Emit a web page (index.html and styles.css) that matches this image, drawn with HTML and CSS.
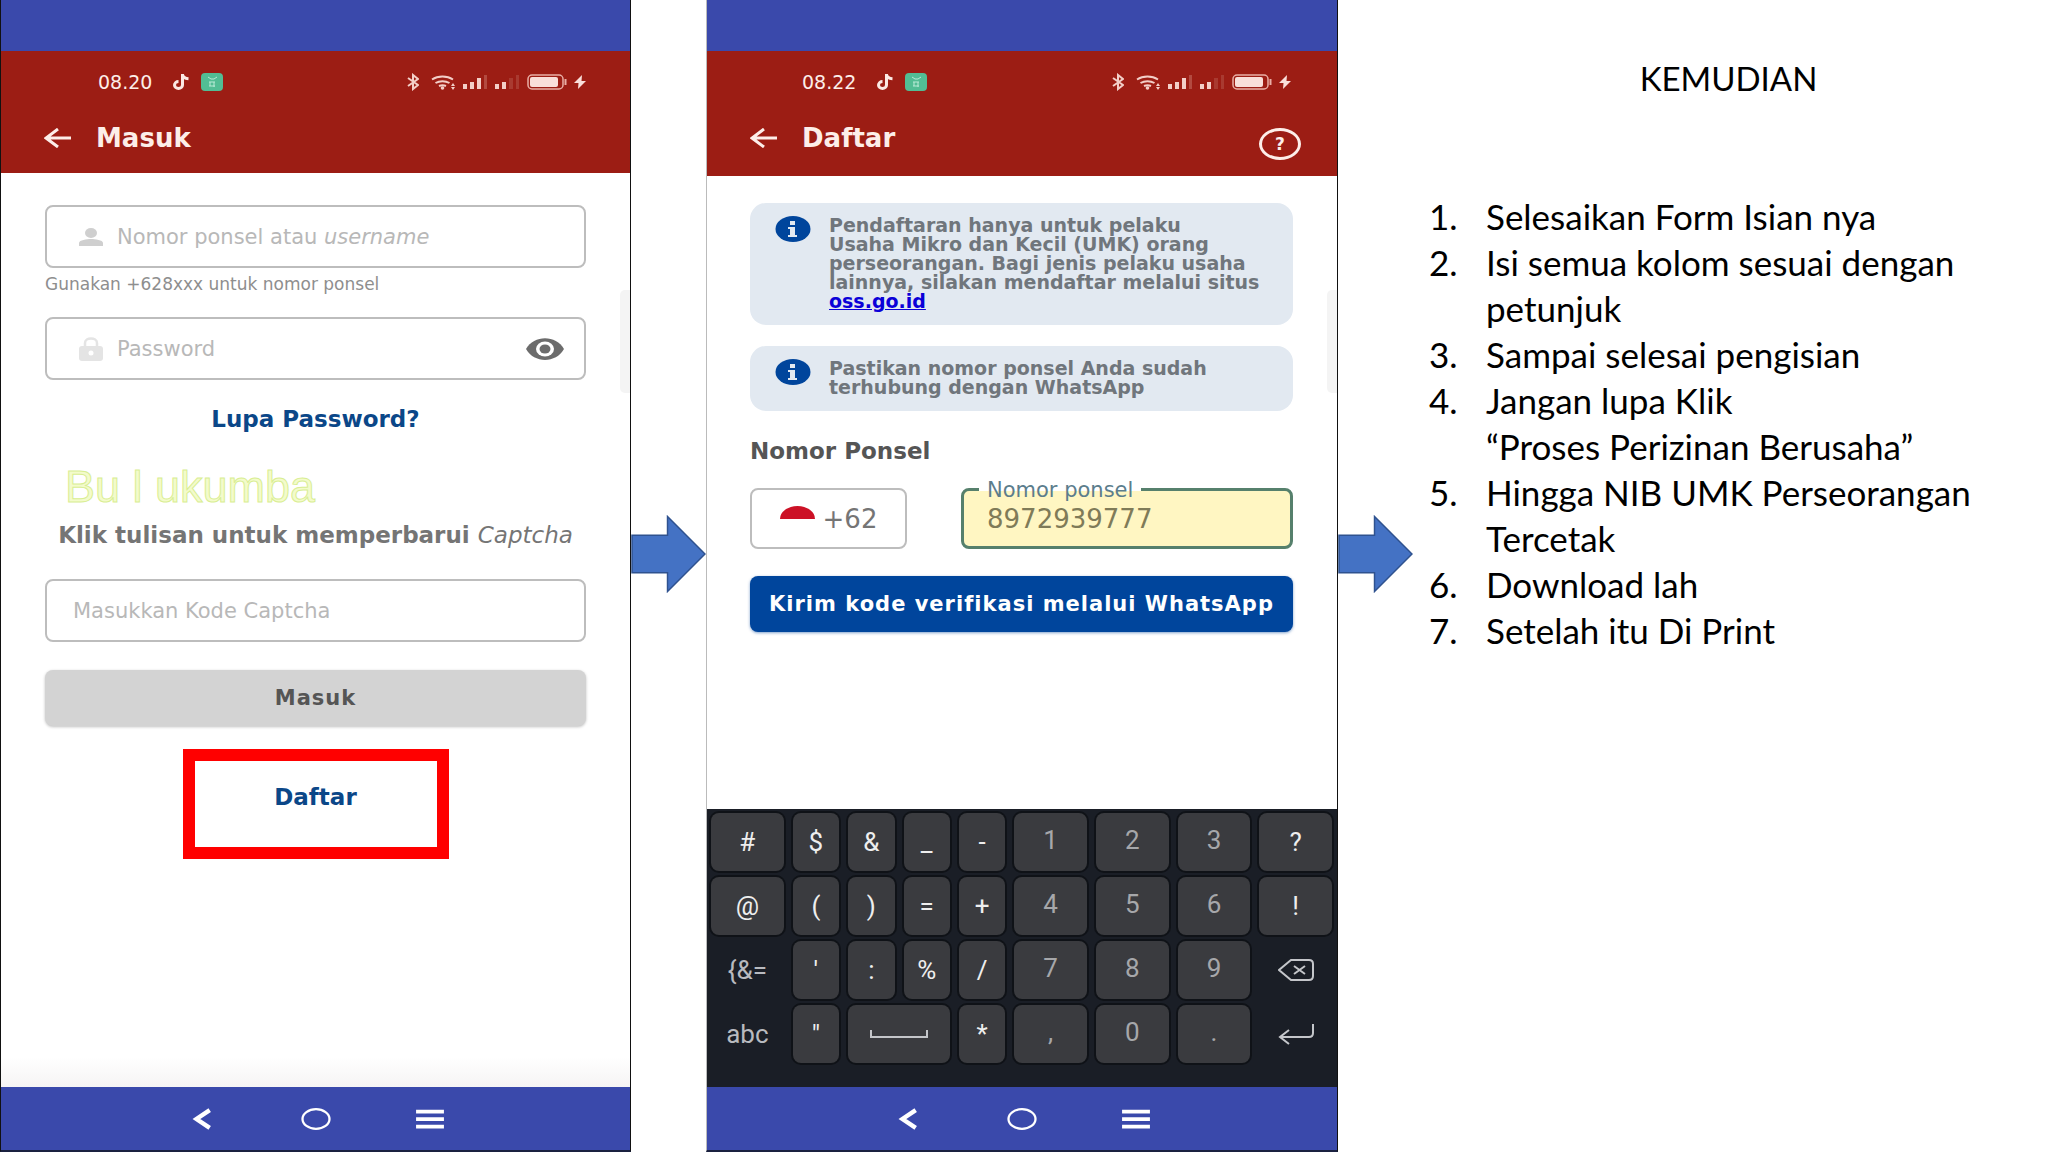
FILE: index.html
```html
<!DOCTYPE html>
<html lang="id">
<head>
  <meta charset="UTF-8">
  <meta name="viewport" content="width=device-width, initial-scale=1.0">
  <title>Panduan Pendaftaran NIB</title>
  <link rel="stylesheet" href="styles.css">
</head>
<body>
  <!-- Ikon bersama -->
  <svg class="sprite" aria-hidden="true">
    <symbol id="tiktok" viewBox="0 0 18 18">
      <path d="M10.500 1v11a4 3.500 0 1 1-4-3.500M10.500 1.500c.5 3 2.500 4 6 4.200" fill="none" stroke="#fbe9e4" stroke-width="3"/>
    </symbol>
    <symbol id="app" viewBox="0 0 22 18">
      <rect width="22" height="18" rx="4" fill="#52bd94"/>
      <path d="M7 4l3 2h3l3-2M8 9h6M8 13h6M9 9v4M13 9v5" fill="none" stroke="#b9ead6" stroke-width="1"/>
    </symbol>
    <symbol id="bluetooth" viewBox="0 0 12 16">
      <path d="M1 4l10 7-5 4V1l5 4L1 12" fill="none" stroke="#f3cfc8" stroke-width="2"/>
    </symbol>
    <symbol id="wifi" viewBox="0 0 25 16">
      <path d="M1 5.500a16 12 0 0 1 21 0M4.500 9a11 8 0 0 1 14 0M8 12a6 4 0 0 1 7 0" fill="none" stroke="#f3cfc8" stroke-width="2"/>
      <circle cx="11.500" cy="14" r="1.800" fill="#f3cfc8"/>
      <path d="M20 12l2-3 2 3zM20 13l2 3 2-3z" fill="#f3cfc8"/>
    </symbol>
    <symbol id="signal" viewBox="0 0 25 14">
      <path d="M0 9h4v5H0zM7 7h4v7H7zM14 3h4v11h-4z" fill="#f3cfc8"/>
      <path d="M21 0h3v14h-3z" fill="#b34a40"/>
    </symbol>
    <symbol id="signal-low" viewBox="0 0 25 14">
      <path d="M0 9h4v5H0zM7 7h4v7H7z" fill="#f3cfc8"/>
      <path d="M14 3h4v11h-4zM21 0h3v14h-3z" fill="#a93a30"/>
    </symbol>
    <symbol id="battery" viewBox="0 0 40 16">
      <rect x="1" y="1" width="35" height="14" rx="4" fill="none" stroke="#e9aea5" stroke-width="1.500"/>
      <rect x="3" y="3" width="28" height="10" rx="2" fill="#f9dfda"/>
      <path d="M38.500 5v6" stroke="#e9aea5" stroke-width="2"/>
    </symbol>
    <symbol id="bolt" viewBox="0 0 12 14">
      <path d="M8 0L0 8h4.500L4 14l8-8H7.500z" fill="#f9dfda"/>
    </symbol>
    <symbol id="back" viewBox="0 0 28 20">
      <path d="M27 10H2M14 1L2 10l12 9" fill="none" stroke="#fdeee9" stroke-width="3"/>
    </symbol>
    <symbol id="info" viewBox="0 0 36 26">
      <ellipse cx="18" cy="13" rx="17.500" ry="13" fill="#00459c"/>
      <path d="M15 5h5v4h-5zM13 11h7v8h2v2h-9v-2h2v-6h-2z" fill="#e2e9f1"/>
    </symbol>
    <symbol id="nav-back" viewBox="0 0 18 20">
      <path d="M16 2L4 10l12 8" fill="none" stroke="#fff" stroke-width="4"/>
    </symbol>
    <symbol id="nav-home" viewBox="0 0 30 22">
      <ellipse cx="15" cy="11" rx="13.500" ry="9.800" fill="none" stroke="#fff" stroke-width="2.300"/>
    </symbol>
    <symbol id="nav-menu" viewBox="0 0 28 18">
      <path d="M1 2h26M1 9h26M1 16h26" stroke="#fff" stroke-width="3.500"/>
    </symbol>
    <symbol id="arrow" viewBox="0 0 76 78">
      <path d="M1 20H37V1L75 39 37 77V58H1z" fill="#4472c4" stroke="#2f528f" stroke-width="1.500"/>
    </symbol>
  </svg>

  <main class="slide">
    <section class="phone phone-login">
      <div class="top-strip"></div>
      <header class="app-header">
        <div class="status">
          <span class="clock">08.20</span>
          <svg class="i-tiktok"><use href="#tiktok"/></svg>
          <svg class="i-app"><use href="#app"/></svg>
          <div class="status-right">
            <svg class="i-bt"><use href="#bluetooth"/></svg>
            <svg class="i-signal"><use href="#wifi"/></svg>
            <svg class="i-signal"><use href="#signal"/></svg>
            <svg class="i-signal"><use href="#signal-low"/></svg>
            <svg class="i-battery"><use href="#battery"/></svg>
            <svg class="i-bolt"><use href="#bolt"/></svg>
          </div>
        </div>
        <div class="title-bar">
          <button class="icon-btn" aria-label="Kembali"><svg class="i-back"><use href="#back"/></svg></button>
          <h2>Masuk</h2>
        </div>
      </header>

      <form class="login-form">
        <div class="field">
          <svg class="field-icon" viewBox="0 0 24 24"><ellipse cx="12" cy="8" rx="6" ry="5" fill="#cfcfcf"/><path d="M0 21v-3c0-3 8-4 12-4s12 1 12 4v3z" fill="#cfcfcf"/></svg>
          <div class="field-text">
            <input type="text" id="user">
            <label for="user">Nomor ponsel atau <em>username</em></label>
          </div>
        </div>
        <p class="hint">Gunakan +628xxx untuk nomor ponsel</p>

        <div class="field">
          <svg class="field-icon" viewBox="0 0 24 24"><path d="M6 9V6c0-6 12-6 12 0v3" fill="none" stroke="#e4e4e4" stroke-width="2.500"/><rect y="9" width="24" height="15" rx="3" fill="#e4e4e4"/><circle cx="12" cy="16" r="2.500" fill="#fff"/></svg>
          <div class="field-text">
            <input type="password" id="pass">
            <label for="pass">Password</label>
          </div>
          <button type="button" class="icon-btn" aria-label="Lihat password">
            <svg class="i-eye" viewBox="0 0 38 22"><path d="M0 11C8-3.500 30-3.500 38 11 30 25.500 8 25.500 0 11z" fill="#6c6c6c"/><ellipse cx="19" cy="11" rx="9" ry="7.500" fill="#fff"/><ellipse cx="19" cy="11" rx="5.500" ry="4.500" fill="#6c6c6c"/></svg>
          </button>
        </div>

        <a href="#" class="link forgot">Lupa Password?</a>
        <button type="button" class="captcha">Bu l ukumba</button>
        <p class="captcha-note">Klik tulisan untuk memperbarui <em>Captcha</em></p>

        <div class="field field-plain">
          <div class="field-text">
            <input type="text" id="captcha">
            <label for="captcha">Masukkan Kode Captcha</label>
          </div>
        </div>

        <button type="button" class="btn btn-grey">Masuk</button>
        <div class="highlight"><a href="#" class="link">Daftar</a></div>
      </form>

      <div class="scroll-hint"></div>
      <nav class="nav-bar">
        <button class="icon-btn" aria-label="Kembali"><svg><use href="#nav-back"/></svg></button>
        <button class="icon-btn" aria-label="Beranda"><svg><use href="#nav-home"/></svg></button>
        <button class="icon-btn" aria-label="Menu"><svg><use href="#nav-menu"/></svg></button>
      </nav>
    </section>

    <svg class="arrow"><use href="#arrow"/></svg>

    <section class="phone phone-register">
      <div class="top-strip"></div>
      <header class="app-header">
        <div class="status">
          <span class="clock">08.22</span>
          <svg class="i-tiktok"><use href="#tiktok"/></svg>
          <svg class="i-app"><use href="#app"/></svg>
          <div class="status-right">
            <svg class="i-bt"><use href="#bluetooth"/></svg>
            <svg class="i-signal"><use href="#wifi"/></svg>
            <svg class="i-signal"><use href="#signal"/></svg>
            <svg class="i-signal"><use href="#signal-low"/></svg>
            <svg class="i-battery"><use href="#battery"/></svg>
            <svg class="i-bolt"><use href="#bolt"/></svg>
          </div>
        </div>
        <div class="title-bar">
          <button class="icon-btn" aria-label="Kembali"><svg class="i-back"><use href="#back"/></svg></button>
          <h2>Daftar</h2>
          <button class="help" aria-label="Bantuan">?</button>
        </div>
      </header>

      <form class="register-form">
        <div class="notice">
          <svg><use href="#info"/></svg>
          <p>Pendaftaran hanya untuk pelaku<br>Usaha Mikro dan Kecil (UMK) orang<br>perseorangan. Bagi jenis pelaku usaha<br>lainnya, silakan mendaftar melalui situs<br><a href="#">oss.go.id</a></p>
        </div>
        <div class="notice">
          <svg><use href="#info"/></svg>
          <p>Pastikan nomor ponsel Anda sudah<br>terhubung dengan WhatsApp</p>
        </div>

        <h3>Nomor Ponsel</h3>
        <div class="phone-row">
          <button type="button" class="country"><span class="flag"></span>+62</button>
          <div class="number">
            <label for="number">Nomor ponsel</label>
            <input type="tel" id="number" value="8972939777">
          </div>
        </div>
        <button type="button" class="btn btn-blue">Kirim kode verifikasi melalui WhatsApp</button>
      </form>

      <div class="scroll-hint"></div>
      <div class="keyboard">
        <button>#</button><button>$</button><button>&amp;</button><button>_</button><button>-</button><button class="num">1</button><button class="num">2</button><button class="num">3</button><button>?</button>
        <button>@</button><button>(</button><button>)</button><button>=</button><button>+</button><button class="num">4</button><button class="num">5</button><button class="num">6</button><button>!</button>
        <button class="flat">{&amp;=</button><button>'</button><button>:</button><button>%</button><button>/</button><button class="num">7</button><button class="num">8</button><button class="num">9</button>
        <button class="flat" aria-label="Hapus"><svg viewBox="0 0 36 22"><path d="M13 1h18q4 0 4 4v12q0 4-4 4H13L1 11zM16 7l11 8M27 7l-11 8" fill="none" stroke="#c4c6ca" stroke-width="2"/></svg></button>
        <button class="flat">abc</button><button>"</button>
        <button class="space" aria-label="Spasi"><svg viewBox="0 0 58 10"><path d="M1 1v7h56V1" fill="none" stroke="#c4c6ca" stroke-width="2"/></svg></button>
        <button>*</button><button class="num">,</button><button class="num">0</button><button class="num">.</button>
        <button class="flat" aria-label="Enter"><svg viewBox="0 0 36 22"><path d="M35 1v9q0 4-4 4H2M11 7L2 14l9 7" fill="none" stroke="#c4c6ca" stroke-width="2"/></svg></button>
      </div>
      <nav class="nav-bar">
        <button class="icon-btn" aria-label="Kembali"><svg><use href="#nav-back"/></svg></button>
        <button class="icon-btn" aria-label="Beranda"><svg><use href="#nav-home"/></svg></button>
        <button class="icon-btn" aria-label="Menu"><svg><use href="#nav-menu"/></svg></button>
      </nav>
    </section>

    <svg class="arrow"><use href="#arrow"/></svg>

    <section class="steps">
      <h1>KEMUDIAN</h1>
      <ol>
        <li>Selesaikan Form Isian nya</li>
        <li>Isi semua kolom sesuai dengan petunjuk</li>
        <li>Sampai selesai pengisian</li>
        <li>Jangan lupa Klik<br>“Proses Perizinan Berusaha”</li>
        <li>Hingga NIB UMK Perseorangan Tercetak</li>
        <li>Download lah</li>
        <li>Setelah itu Di Print</li>
      </ol>
    </section>
  </main>
</body>
</html>
```

FILE: styles.css
```css
* {
  box-sizing: border-box;
}

body {
  margin: 0;
  background-color: #ffffff;
  color: #000000;
  font-family: "DejaVu Sans", sans-serif;
}

h1, h2, h3, p, ol {
  margin: 0;
}

button, input {
  font-family: inherit;
  padding: 0;
  border: none;
  background: none;
}

button {
  cursor: pointer;
}

svg {
  display: block;
  flex: none;
}

.sprite {
  position: absolute;
  width: 0;
  height: 0;
}

.slide {
  display: grid;
  grid-template-columns: 631fr 75fr 632fr 75fr 635fr;
  min-height: 100vh;
}

/* Ponsel */
.phone {
  position: relative;
  display: flex;
  flex-direction: column;
  min-width: 0;
  border-left: 1px solid #111111;
  border-right: 1px solid #111111;
  border-bottom: 2px solid #1a2140;
}

.phone-register {
  border-left-color: #bbbbbb;
}

.top-strip {
  height: 51px;
  background-color: #3a49ab;
}

.app-header {
  height: 122px;
  background-color: #9c1d14;
  color: #fdeee9;
}

.phone-register .app-header {
  height: 125px;
}

.status {
  display: flex;
  align-items: center;
  height: 62px;
  padding: 0 44px 0 97px;
}

.phone-register .status {
  padding: 0 46px 0 95px;
}

.clock {
  font-size: 19px;
  margin-right: 20px;
}

.i-tiktok {
  width: 18px;
  height: 18px;
  margin-right: 11px;
}

.i-app {
  width: 22px;
  height: 18px;
}

.status-right {
  display: flex;
  align-items: center;
  gap: 7px;
  margin-left: auto;
}

.i-bt {
  width: 12px;
  height: 18px;
  margin-right: 5px;
}

.i-signal {
  width: 25px;
  height: 16px;
}

.i-battery {
  width: 40px;
  height: 16px;
}

.i-bolt {
  width: 12px;
  height: 14px;
}

.title-bar {
  display: flex;
  align-items: center;
  height: 50px;
  padding: 0 36px 0 43px;
}

.title-bar h2 {
  margin-left: 24px;
  font-size: 26px;
}

.i-back {
  width: 28px;
  height: 20px;
}

.help {
  width: 42px;
  height: 32px;
  margin-left: auto;
  margin-top: 12px;
  border: 3px solid #fdeee9;
  border-radius: 50%;
  color: #fdeee9;
  font-size: 17px;
  font-weight: bold;
}

.scroll-hint {
  position: absolute;
  top: 290px;
  right: 0;
  width: 10px;
  height: 103px;
  border-radius: 5px 0 0 5px;
  background-color: #f4f4f4;
}

/* Form masuk */
.login-form {
  flex: 1;
  padding: 32px 44px 0;
  background: linear-gradient(to top, #f6f4f4, #ffffff 30px);
}

.login-form .link {
  color: #0b4788;
}

.field {
  display: flex;
  align-items: center;
  height: 63px;
  padding: 0 20px 0 32px;
  border: 2px solid #bdbdbd;
  border-radius: 8px;
  background-color: #ffffff;
}

.field-plain {
  padding-left: 26px;
}

.field-icon {
  width: 24px;
  height: 24px;
  margin-right: 14px;
}

.field-text {
  position: relative;
  flex: 1;
  align-self: stretch;
}

.field-text input {
  width: 100%;
  height: 100%;
  outline: none;
  font-size: 21px;
}

.field-text label {
  position: absolute;
  inset: 0;
  display: flex;
  align-items: center;
  font-size: 21px;
  color: #b8b8b8;
  white-space: pre;
  pointer-events: none;
}

.i-eye {
  width: 38px;
  height: 22px;
}

.hint {
  height: 49px;
  padding-top: 6px;
  font-size: 17px;
  line-height: 20px;
  color: #8e8e8e;
}

.link {
  font-size: 23px;
  font-weight: bold;
  text-decoration: none;
}

.forgot {
  display: block;
  width: fit-content;
  margin: 27px auto 0;
  line-height: 24px;
}

.captcha {
  display: block;
  margin: 32px 0 0 20px;
  font-family: "Liberation Sans", sans-serif;
  font-size: 45px;
  line-height: 48px;
  color: #f3fbcb;
  -webkit-text-stroke: 1px #d9ee93;
}

.captcha-note {
  margin: 12px 0 32px;
  font-size: 23px;
  font-weight: bold;
  line-height: 24px;
  text-align: center;
  white-space: nowrap;
  color: #757575;
}

.captcha-note em {
  font-weight: normal;
}

.btn {
  display: block;
  width: 100%;
  height: 56px;
  border-radius: 8px;
  font-size: 21px;
  font-weight: bold;
  letter-spacing: 1px;
  white-space: nowrap;
}

.btn-grey {
  margin-top: 28px;
  background-color: #d3d3d3;
  color: #555555;
  box-shadow: 0 1px 3px rgba(0, 0, 0, 0.25);
}

.btn-blue {
  margin-top: 27px;
  background-color: #00459c;
  color: #ffffff;
  box-shadow: 0 1px 3px rgba(0, 69, 156, 0.5);
}

.highlight {
  width: 266px;
  height: 110px;
  margin: 23px auto 0;
  padding-top: 24px;
  border: 12px solid #ff0000;
  text-align: center;
  line-height: 24px;
}

/* Navigasi bawah */
.nav-bar {
  display: flex;
  justify-content: center;
  gap: 84px;
  height: 63px;
  background-color: #3a49ab;
}

.icon-btn {
  display: flex;
  align-items: center;
  justify-content: center;
}

.nav-bar svg {
  width: 30px;
  height: 22px;
}

/* Form daftar */
.register-form {
  flex: 1;
  padding: 27px 44px 0 43px;
}

.notice {
  display: flex;
  gap: 18px;
  padding: 13px 16px 14px 25px;
  margin-bottom: 21px;
  border-radius: 16px;
  background-color: #e2e9f1;
}

.notice svg {
  width: 36px;
  height: 26px;
}

.notice p {
  font-size: 19px;
  font-weight: bold;
  line-height: 19px;
  white-space: nowrap;
  color: #70767c;
}

.notice a {
  color: #0b00d8;
}

.register-form h3 {
  margin-top: 28px;
  font-size: 23px;
  line-height: 24px;
  color: #555555;
}

.phone-row {
  display: flex;
  gap: 54px;
  margin-top: 25px;
}

.country {
  display: flex;
  align-items: center;
  justify-content: center;
  gap: 8px;
  width: 157px;
  height: 61px;
  border: 2px solid #bdbdbd;
  border-radius: 8px;
  font-size: 26px;
  color: #757575;
}

.flag {
  width: 35px;
  height: 26px;
  border-radius: 50%;
  background: linear-gradient(#cc1126 50%, #ffffff 50%);
}

.number {
  position: relative;
  flex: 1;
}

.number label {
  position: absolute;
  top: -9px;
  left: 18px;
  padding: 0 8px;
  font-size: 21px;
  line-height: 22px;
  color: #5c7d8c;
  background: linear-gradient(#ffffff 12px, #fff6c2 12px);
}

.number input {
  width: 100%;
  height: 61px;
  padding-left: 23px;
  border: 3px solid #56806c;
  border-radius: 8px;
  background-color: #fff6c2;
  font-size: 26px;
  color: #7f7b58;
  outline: none;
}

/* Papan ketik */
.keyboard {
  display: grid;
  grid-template-columns: 72fr 46fr 46fr 46fr 46fr 72fr 72fr 72fr 72fr;
  grid-auto-rows: 58px;
  gap: 6px 9px;
  height: 278px;
  padding: 4px 5px 0 4px;
  background-color: #1a1e26;
}

.keyboard button {
  display: flex;
  align-items: center;
  justify-content: center;
  min-width: 0;
  border-radius: 8px;
  background-color: #3a3b3f;
  box-shadow: 0 0 0 2px #0f1217;
  font-family: Roboto, sans-serif;
  font-size: 26px;
  color: #eeeeee;
}

.keyboard .num {
  padding-bottom: 4px;
  color: #a6a7aa;
}

.keyboard .flat {
  background: none;
  box-shadow: none;
  color: #b8babf;
}

.keyboard .flat svg {
  width: 36px;
  height: 22px;
}

.keyboard .space {
  grid-column: span 2;
}

.space svg {
  width: 58px;
  height: 10px;
}

/* Panah */
.arrow {
  width: 100%;
  height: 78px;
  margin-top: 515px;
}

/* Langkah-langkah */
.steps {
  padding: 55px 20px 0 16px;
  font-family: Lato, sans-serif;
  font-size: 35px;
  line-height: 46px;
}

.steps h1 {
  font-size: 33px;
  font-weight: normal;
  text-align: center;
}

.steps ol {
  margin-top: 92px;
  padding: 0;
  list-style: none;
  counter-reset: step;
}

.steps li {
  padding-left: 57px;
  counter-increment: step;
}

.steps li::before {
  content: counter(step) ".";
  float: left;
  margin-left: -57px;
}
```
